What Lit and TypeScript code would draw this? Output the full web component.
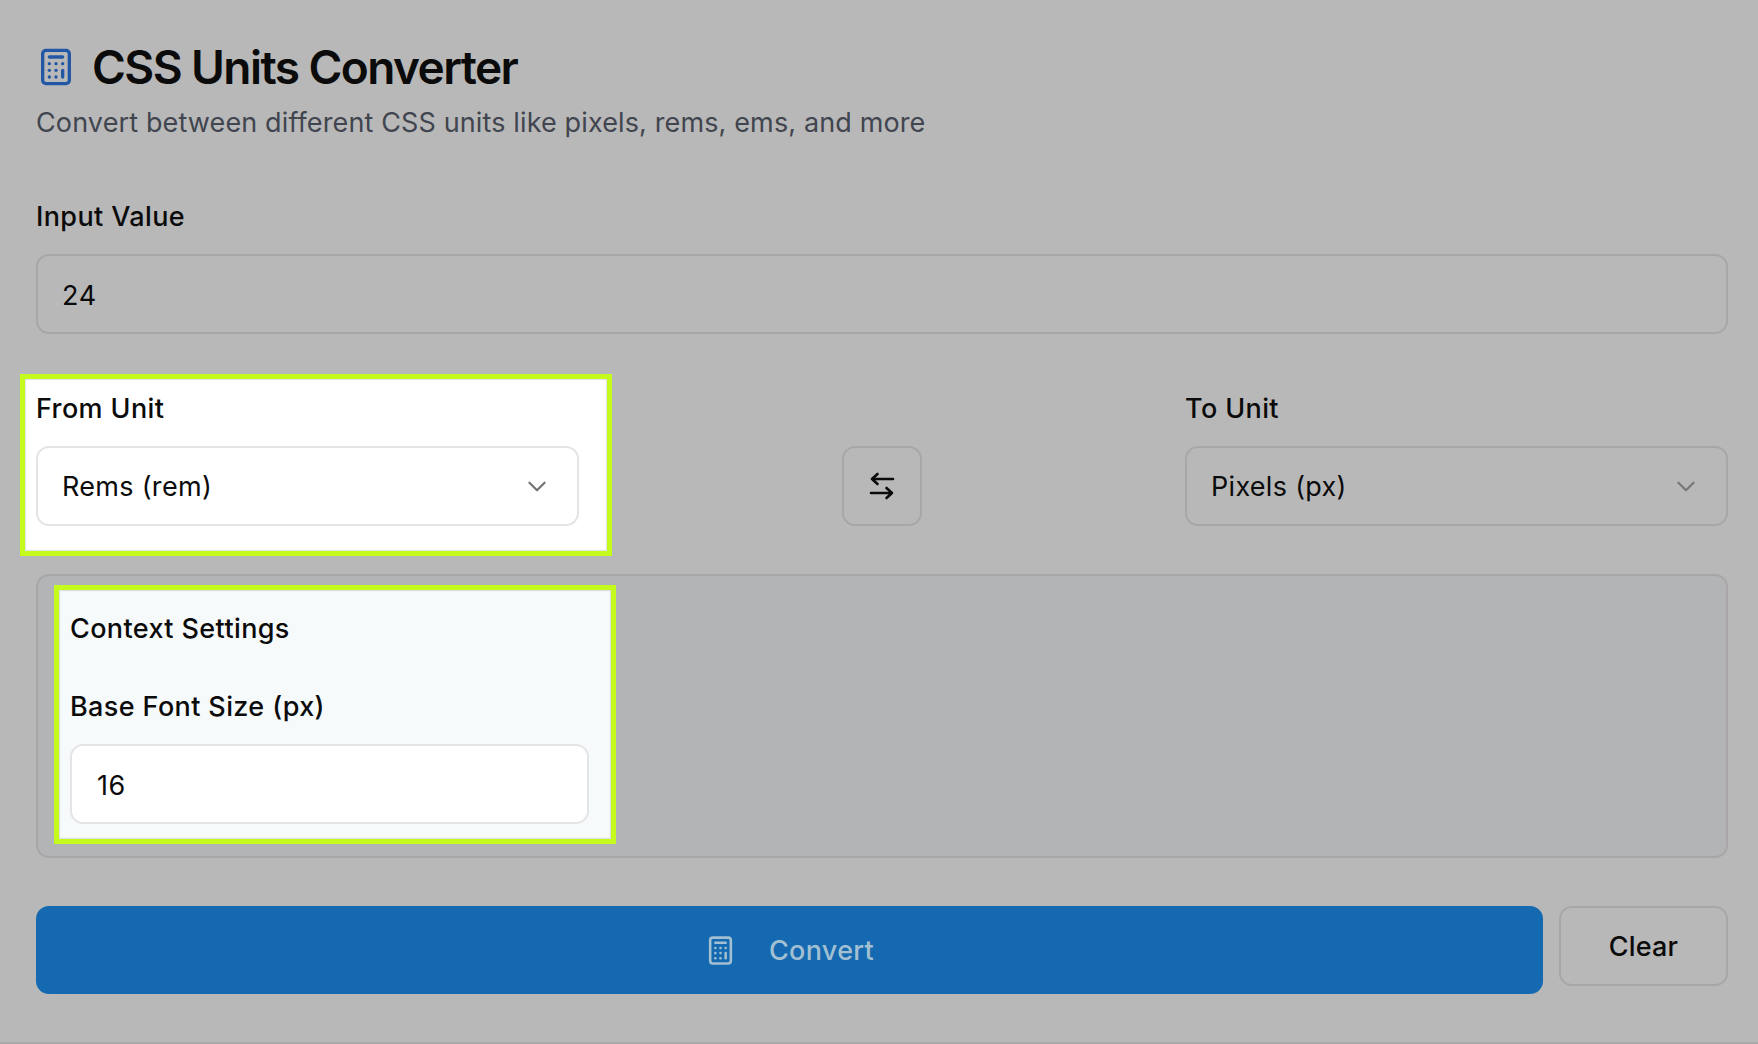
import { LitElement, html, css, svg } from "lit";
import { customElement } from "lit/decorators.js";

const calc = svg`<rect x="4" y="2" width="16" height="20" rx="2"/><line x1="8" x2="16" y1="6" y2="6"/><line x1="16" x2="16" y1="14" y2="18"/><path d="M16 10h.01"/><path d="M12 10h.01"/><path d="M8 10h.01"/><path d="M12 14h.01"/><path d="M8 14h.01"/><path d="M12 18h.01"/><path d="M8 18h.01"/>`;

@customElement("app-root")
export class AppRoot extends LitElement {
  static styles = css`
    :host { display: block; }
    * { box-sizing: border-box; }
    .page {
      height: 1044px; background: #b8b8b8; border-bottom: 2px solid #a9a9a9;
      padding: 40px 30px 0 36px; font-family: Inter, "Liberation Sans", sans-serif; color: #0b0b0b; overflow: hidden;
    }
    .head { display: flex; align-items: center; gap: 16px; height: 54px; }
    .logo { width: 40px; height: 40px; fill: none; stroke: #2257a5; stroke-width: 2; stroke-linecap: round; stroke-linejoin: round; flex: none; }
    h1 { margin: 0; font-size: 46px; line-height: 54px; font-weight: 600; letter-spacing: -0.034em; }
    .sub { margin: 13px 0 0; font-size: 27px; line-height: 32px; color: #41454f; letter-spacing: 0.13px; }
    label, .heading { display: block; font-size: 27px; line-height: 32px; font-weight: 500; letter-spacing: 0.38px; padding-top: 1px; margin-bottom: -1px; }
    .l-input { margin-top: 61px; }
    .control {
      display: flex; align-items: center; justify-content: space-between; width: 100%; height: 80px; margin-top: 22px;
      border: 2px solid #a8a6a7; border-radius: 13px; padding: 1px 24px 0; background: transparent;
      font: 400 27px Inter, "Liberation Sans", sans-serif; letter-spacing: 0.3px; color: #0b0b0b; outline: none;
    }
    input.control { padding-top: 2px; letter-spacing: 0.6px; }
    .light { border-color: #e4e4e7; background: #fff; }
    .chev { width: 26px; height: 26px; margin-top: -2px; fill: none; stroke: #777; stroke-width: 2; stroke-linecap: round; stroke-linejoin: round; margin-right: 3px; }
    .light .chev { stroke: #737373; }
    .row { display: grid; grid-template-columns: 543px 80px 543px; justify-content: space-between; margin-top: 58px; align-items: end; }
    .hl { border: 5px solid #c5fb1c; box-shadow: inset 0 0 1px 1px rgba(0, 0, 0, 0.12); }
    .from { margin: -18px -33px -30px -16px; padding: 13px 28px 25px 11px; background: #fff; }
    .swap {
      display: flex; align-items: center; justify-content: center; width: 80px; height: 80px; padding: 0;
      border: 2px solid #a8a6a7; border-radius: 13px; background: transparent;
    }
    .swap svg { width: 24px; height: 24px; overflow: visible; fill: none; stroke: #0b0b0b; stroke-width: 2.6; stroke-linecap: round; stroke-linejoin: round; }
    .panel { margin-top: 48px; height: 284px; border: 2px solid #a8a6a7; border-radius: 13px; background: #b3b4b6; padding: 9px 16px; }
    .ctx { width: 562px; height: 259px; padding: 22px 21px 15px 11px; background: #f7fafb; }
    .l-base { margin-top: 46px; }
    .ctx .control { margin-top: 22px; width: 519px; height: 80px; padding-left: 25px; }
    .actions { display: flex; gap: 16px; align-items: flex-start; margin-top: 48px; }
    .convert {
      flex: 1; height: 88px; display: flex; align-items: center; justify-content: center; gap: 33px; border: 0; border-radius: 13px;
      background: #1469b0; color: #a3bfd2; font: 500 27px Inter, "Liberation Sans", sans-serif; letter-spacing: 0.3px;
    }
    .convert svg { width: 31px; height: 31px; fill: none; stroke: currentColor; stroke-width: 2; stroke-linecap: round; stroke-linejoin: round; }
    .clear {
      width: 169px; height: 80px; border: 2px solid #a8a6a7; border-radius: 13px; background: transparent; color: #0b0b0b;
      font: 500 27px Inter, "Liberation Sans", sans-serif; letter-spacing: 0.2px;
    }
  `;

  private chevron() {
    return html`<svg class="chev" viewBox="0 0 24 24"><path d="m5 9 7 7 7-7"/></svg>`;
  }

  render() {
    return html`<div class="page">
      <div class="head">
        <svg class="logo" viewBox="0 0 24 24">${calc}</svg>
        <h1>CSS Units Converter</h1>
      </div>
      <p class="sub">Convert between different CSS units like pixels, rems, ems, and more</p>
      <label class="l-input">Input Value</label>
      <input class="control" value="24" />
      <div class="row">
        <div class="hl from">
          <label>From Unit</label>
          <div class="control light"><span>Rems (rem)</span>${this.chevron()}</div>
        </div>
        <button class="swap" aria-label="Swap units">
          <svg viewBox="0 0 24 24"><path d="M2 5h21M7.500 0 2 5l5.500 5"/><path d="M1 19h21M16.500 14l5.500 5-5.500 5"/></svg>
        </button>
        <div>
          <label>To Unit</label>
          <div class="control"><span>Pixels (px)</span>${this.chevron()}</div>
        </div>
      </div>
      <div class="panel">
        <div class="hl ctx">
          <div class="heading">Context Settings</div>
          <label class="l-base">Base Font Size (px)</label>
          <input class="control light" value="16" />
        </div>
      </div>
      <div class="actions">
        <button class="convert"><svg viewBox="0 0 24 24">${calc}</svg><span>Convert</span></button>
        <button class="clear">Clear</button>
      </div>
    </div>`;
  }
}
